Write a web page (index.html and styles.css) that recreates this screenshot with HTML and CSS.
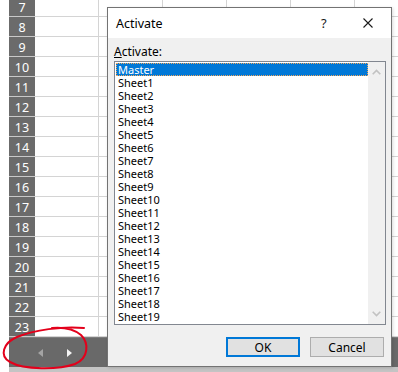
FILE: index.html
```html
<!DOCTYPE html>
<html lang="en">
<head>
    <meta charset="UTF-8">
    <title>Activate</title>
    <link rel="stylesheet" href="styles.css">
</head>
<body>

    <div class="workbook">
        <div class="sheet">
            <div class="row"><span class="rowhead">7</span><span class="cell"></span><span class="cell"></span><span class="cell"></span><span class="cell"></span><span class="cell"></span><span class="cell"></span></div>
            <div class="row"><span class="rowhead">8</span><span class="cell"></span><span class="cell"></span><span class="cell"></span><span class="cell"></span><span class="cell"></span><span class="cell"></span></div>
            <div class="row"><span class="rowhead">9</span><span class="cell"></span><span class="cell"></span><span class="cell"></span><span class="cell"></span><span class="cell"></span><span class="cell"></span></div>
            <div class="row"><span class="rowhead">10</span><span class="cell"></span><span class="cell"></span><span class="cell"></span><span class="cell"></span><span class="cell"></span><span class="cell"></span></div>
            <div class="row"><span class="rowhead">11</span><span class="cell"></span><span class="cell"></span><span class="cell"></span><span class="cell"></span><span class="cell"></span><span class="cell"></span></div>
            <div class="row"><span class="rowhead">12</span><span class="cell"></span><span class="cell"></span><span class="cell"></span><span class="cell"></span><span class="cell"></span><span class="cell"></span></div>
            <div class="row"><span class="rowhead">13</span><span class="cell"></span><span class="cell"></span><span class="cell"></span><span class="cell"></span><span class="cell"></span><span class="cell"></span></div>
            <div class="row"><span class="rowhead">14</span><span class="cell"></span><span class="cell"></span><span class="cell"></span><span class="cell"></span><span class="cell"></span><span class="cell"></span></div>
            <div class="row"><span class="rowhead">15</span><span class="cell"></span><span class="cell"></span><span class="cell"></span><span class="cell"></span><span class="cell"></span><span class="cell"></span></div>
            <div class="row"><span class="rowhead">16</span><span class="cell"></span><span class="cell"></span><span class="cell"></span><span class="cell"></span><span class="cell"></span><span class="cell"></span></div>
            <div class="row"><span class="rowhead">17</span><span class="cell"></span><span class="cell"></span><span class="cell"></span><span class="cell"></span><span class="cell"></span><span class="cell"></span></div>
            <div class="row"><span class="rowhead">18</span><span class="cell"></span><span class="cell"></span><span class="cell"></span><span class="cell"></span><span class="cell"></span><span class="cell"></span></div>
            <div class="row"><span class="rowhead">19</span><span class="cell"></span><span class="cell"></span><span class="cell"></span><span class="cell"></span><span class="cell"></span><span class="cell"></span></div>
            <div class="row"><span class="rowhead">20</span><span class="cell"></span><span class="cell"></span><span class="cell"></span><span class="cell"></span><span class="cell"></span><span class="cell"></span></div>
            <div class="row"><span class="rowhead">21</span><span class="cell"></span><span class="cell"></span><span class="cell"></span><span class="cell"></span><span class="cell"></span><span class="cell"></span></div>
            <div class="row"><span class="rowhead">22</span><span class="cell"></span><span class="cell"></span><span class="cell"></span><span class="cell"></span><span class="cell"></span><span class="cell"></span></div>
            <div class="row"><span class="rowhead">23</span><span class="cell"></span><span class="cell"></span><span class="cell"></span><span class="cell"></span><span class="cell"></span><span class="cell"></span></div>
        </div>

        <div class="tabbar">
            <span class="nav-arrow nav-prev"></span>
            <span class="nav-arrow nav-next"></span>
        </div>
        <div class="statusbar"></div>
    </div>

    <!-- red marker scribble around the tab scroll arrows -->
    <svg class="scribble" viewBox="0 0 398 372" xmlns="http://www.w3.org/2000/svg">
        <path d="M84 328 C62 326 34 330 17 337 C3 343 -1 356 10 362 C24 370 58 370 75 364 C89 358 89 343 81 335 C75 330 64 327 52 328" fill="none" stroke="#e3001b" stroke-width="2" stroke-linecap="round"/>
    </svg>

    <div class="dialog">
        <div class="titlebar">
            <span class="title">Activate</span>
            <span class="help">?</span>
            <svg class="close" viewBox="0 0 10 10" xmlns="http://www.w3.org/2000/svg">
                <path d="M0.5 0.5 L9.5 9.5 M9.5 0.5 L0.5 9.5" stroke="#1a1a1a" stroke-width="1.1"/>
            </svg>
        </div>
        <div class="dialog-body">
            <label class="field-label"><u>A</u>ctivate:</label>
            <div class="listbox">
                <ul class="items">
                    <li class="selected">Master</li>
                    <li>Sheet1</li>
                    <li>Sheet2</li>
                    <li>Sheet3</li>
                    <li>Sheet4</li>
                    <li>Sheet5</li>
                    <li>Sheet6</li>
                    <li>Sheet7</li>
                    <li>Sheet8</li>
                    <li>Sheet9</li>
                    <li>Sheet10</li>
                    <li>Sheet11</li>
                    <li>Sheet12</li>
                    <li>Sheet13</li>
                    <li>Sheet14</li>
                    <li>Sheet15</li>
                    <li>Sheet16</li>
                    <li>Sheet17</li>
                    <li>Sheet18</li>
                    <li>Sheet19</li>
                </ul>
                <div class="scrollbar">
                    <svg class="chevron" viewBox="0 0 9 6" xmlns="http://www.w3.org/2000/svg">
                        <path d="M0.7 5.3 L4.5 1.5 L8.3 5.3" fill="none" stroke="#c2c2c2" stroke-width="1.6"/>
                    </svg>
                    <svg class="chevron" viewBox="0 0 9 6" xmlns="http://www.w3.org/2000/svg">
                        <path d="M0.7 0.7 L4.5 4.5 L8.3 0.7" fill="none" stroke="#c2c2c2" stroke-width="1.6"/>
                    </svg>
                </div>
            </div>
            <div class="buttons">
                <button class="btn btn-default">OK</button>
                <button class="btn">Cancel</button>
            </div>
        </div>
    </div>

</body>
</html>
```

FILE: styles.css
```css
body {
    margin: 0;
    width: 398px;
    height: 372px;
    overflow: hidden;
    position: relative;
    background-color: #ffffff;
    font-family: 'Noto Sans', 'DejaVu Sans', sans-serif;
}

/* Spreadsheet behind the dialog */
.workbook {
    display: flex;
    flex-direction: column;
    height: 372px;
}

.sheet {
    margin-top: -3px;
    padding-left: 9px;
}

.row {
    display: flex;
    height: 20px;
}

.rowhead {
    flex: 0 0 26px;
    box-sizing: border-box;
    background-color: #6b6b6b;
    border-bottom: 1px solid #c9c9c9;
    color: #ffffff;
    font-size: 12.5px;
    line-height: 16px;
    padding-top: 3px;
    text-align: center;
}

.cell {
    flex: 0 0 64px;
    box-sizing: border-box;
    border-right: 1px solid #d4d4d4;
    border-bottom: 1px solid #d4d4d4;
}

.tabbar {
    height: 29px;
    margin-left: 9px;
    background-color: #696969;
    border-top: 1px solid #7d7d7d;
    display: flex;
    align-items: center;
    gap: 24px;
    padding-left: 29px;
}

.nav-arrow {
    width: 0;
    height: 0;
    border-top: 4px solid transparent;
    border-bottom: 4px solid transparent;
}
.nav-prev {
    border-right: 5px solid #a4a4a4;
}
.nav-next {
    border-left: 5px solid #f4f4f4;
}

.statusbar {
    flex: 1;
    margin-left: 9px;
    background-color: #c4c4c4;
}

.scribble {
    position: absolute;
    left: 0;
    top: 0;
    width: 398px;
    height: 372px;
    pointer-events: none;
}

/* Activate dialog */
.dialog {
    position: absolute;
    left: 107px;
    top: 7px;
    width: 285px;
    height: 360px;
    box-sizing: border-box;
    border: 1px solid #737373;
    background-color: #f0f0f0;
    display: flex;
    flex-direction: column;
    box-shadow: 1px 1px 3px rgba(0, 0, 0, 0.15);
    color: #000000;
}

.titlebar {
    height: 30px;
    background-color: #ffffff;
    display: flex;
    align-items: center;
    padding-left: 8px;
}

.title {
    flex: 1;
    font-size: 12.5px;
}

.help {
    font-size: 13px;
    width: 12px;
    margin-right: 30px;
    color: #1a1a1a;
}

.close {
    width: 10px;
    height: 10px;
    margin-right: 18px;
}

.dialog-body {
    flex: 1;
    display: flex;
    flex-direction: column;
    padding: 7px 5px 0 6px;
}

.field-label {
    font-size: 12px;
    line-height: 14px;
    margin-bottom: 2px;
}

.listbox {
    display: flex;
    height: 264px;
    box-sizing: border-box;
    border: 1px solid #828790;
    background-color: #ffffff;
}

.items {
    flex: 1;
    list-style: none;
    margin: 0;
    padding: 1px 0 0 1px;
    font-size: 11px;
}

.items li {
    height: 13px;
    line-height: 13px;
    padding-left: 2px;
}

.items li.selected {
    background-color: #0078d7;
    color: #ffffff;
    outline: 1px dotted #f2a65a;
    outline-offset: -1px;
}

.scrollbar {
    flex: 0 0 17px;
    background-color: #f0f0f0;
    display: flex;
    flex-direction: column;
    justify-content: space-between;
    align-items: center;
    padding: 7px 0 7px;
}

.chevron {
    width: 9px;
    height: 6px;
}

.buttons {
    display: flex;
    justify-content: flex-end;
    gap: 10px;
    margin-top: 12px;
    padding-right: 2px;
}

.btn {
    width: 74px;
    height: 20px;
    box-sizing: border-box;
    border: 1px solid #adadad;
    background-color: #e1e1e1;
    font-family: inherit;
    font-size: 12px;
    color: #000000;
    padding: 0;
}
.btn-default {
    border: 2px solid #0078d7;
}
```
